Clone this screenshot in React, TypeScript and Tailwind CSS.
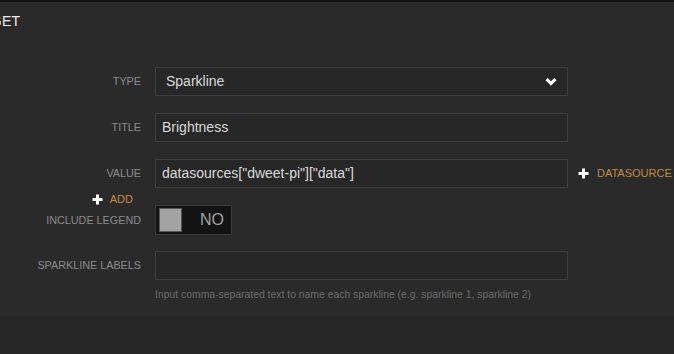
import React from "react";

const PlusIcon = ({ className }: { className?: string }) => (
  <svg viewBox="0 0 11 11" className={className} aria-hidden="true">
    <path d="M5.5 0.5v10M0.5 5.5h10" stroke="#fff" strokeWidth="3" fill="none" />
  </svg>
);

const ChevronDown = ({ className }: { className?: string }) => (
  <svg viewBox="0 0 12 9" className={className} aria-hidden="true">
    <path d="M1.6 2.2 6 6.6 10.4 2.2" stroke="#fff" strokeWidth="3.2" fill="none" strokeLinejoin="miter" />
  </svg>
);

const labelCls =
  "w-[141px] shrink-0 text-right text-[10.8px] uppercase text-[#8c8c8c] leading-none";
const inputCls =
  "w-[413px] h-[29px] border border-[#3e3e3e] bg-[#272727] text-[14px] text-[#dadada] flex items-center";

function Row({ label, children, className }: { label: string; children: React.ReactNode; className?: string }) {
  return (
    <div className={`flex items-center gap-[14px] ${className ?? ""}`}>
      <div className={labelCls}>{label}</div>
      {children}
    </div>
  );
}

export default function App() {
  return (
    <div className="w-[674px] h-[354px] overflow-hidden bg-[#2a2a2a] font-['Liberation_Sans',Arial,sans-serif] flex flex-col">
      <div className="h-[2px] bg-[#111111]" />
      <div className="h-[38px] flex items-center">
        {/* panel title runs off the left edge */}
        <span className="ml-[-37px] text-[14px] text-[#eeeeee] tracking-[0.2px]">WIDGET</span>
      </div>

      <div className="pt-[27px] pb-[15px]">
        <Row label="Type" className="mb-[17px]">
          <div className={`${inputCls} pl-[10px] pr-[10px] justify-between`}>
            <span>Sparkline</span>
            <ChevronDown className="w-[12px] h-[9px]" />
          </div>
        </Row>

        <Row label="Title" className="mb-[17px]">
          <div className={`${inputCls} pl-[6px]`}>Brightness</div>
        </Row>

        <Row label="Value">
          <div className={`${inputCls} pl-[6px]`}>datasources["dweet-pi"]["data"]</div>
          <div className="flex items-center gap-[8px] ml-[-4px]">
            <PlusIcon className="w-[11px] h-[11px]" />
            <span className="text-[11px] text-[#c48b3f] leading-none">DATASOURCE</span>
          </div>
        </Row>

        <div className="w-[141px] flex justify-end items-center gap-[7px] pr-[8px] mt-[5px] h-[12px]">
          <PlusIcon className="w-[11px] h-[11px]" />
          <span className="text-[11px] text-[#c48b3f] leading-none">ADD</span>
        </div>

        <Row label="Include Legend" className="mb-[16px]">
          <div className="w-[77px] h-[30px] border border-[#3a3a3a] bg-[#131313] flex items-center pl-[3px]">
            <div className="w-[23px] h-[24px] bg-[#a3a3a3] border border-[#555555]" />
            <span className="ml-[18px] text-[16px] text-[#a2a2a2] leading-none">NO</span>
          </div>
        </Row>

        <Row label="Sparkline Labels">
          <div className={inputCls} />
        </Row>

        <div className="ml-[155px] mt-[8px] text-[10.4px] leading-[13px] text-[#6b6b6b]">
          Input comma-separated text to name each sparkline (e.g. sparkline 1, sparkline 2)
        </div>
      </div>

      <div className="flex-1 bg-[#272727]" />
    </div>
  );
}
